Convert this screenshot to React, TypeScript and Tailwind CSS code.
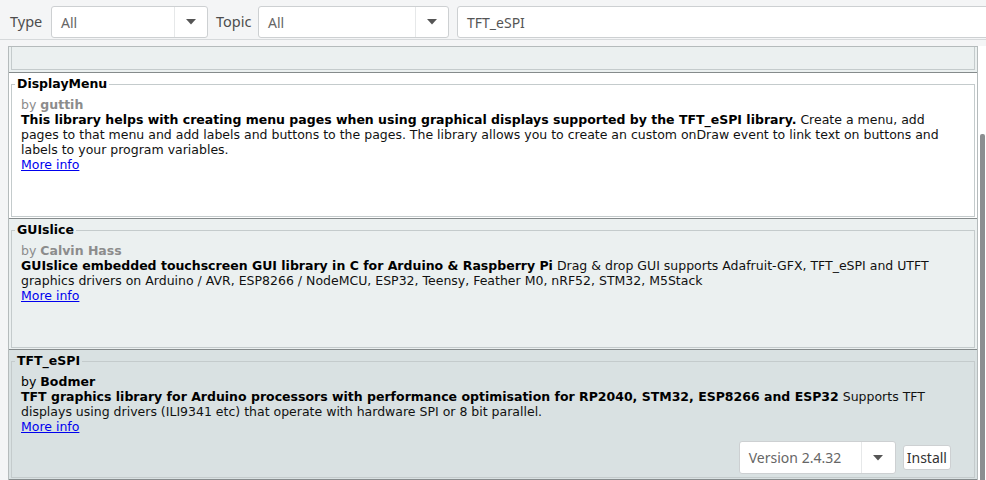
import React from "react";

type Lib = {
  name: string;
  author: string;
  summary: string;
  body: string;
  height: string;
  bg: string;
  selected?: boolean;
};

const LIBS: Lib[] = [
  {
    name: "DisplayMenu",
    author: "guttih",
    summary:
      "This library helps with creating menu pages when using graphical displays supported by the TFT_eSPI library.",
    body:
      "Create a menu, add pages to that menu and add labels and buttons to the pages. The library allows you to create an custom onDraw event to link text on buttons and labels to your program variables.",
    height: "h-[146px]",
    bg: "bg-white",
  },
  {
    name: "GUIslice",
    author: "Calvin Hass",
    summary:
      "GUIslice embedded touchscreen GUI library in C for Arduino & Raspberry Pi",
    body:
      "Drag & drop GUI supports Adafruit-GFX, TFT_eSPI and UTFT graphics drivers on Arduino / AVR, ESP8266 / NodeMCU, ESP32, Teensy, Feather M0, nRF52, STM32, M5Stack",
    height: "h-[131px]",
    bg: "bg-[#ebf0f0]",
  },
  {
    name: "TFT_eSPI",
    author: "Bodmer",
    summary:
      "TFT graphics library for Arduino processors with performance optimisation for RP2040, STM32, ESP8266 and ESP32",
    body:
      "Supports TFT displays using drivers (ILI9341 etc) that operate with hardware SPI or 8 bit parallel.",
    height: "h-[130px]",
    bg: "bg-[#d9e1e2]",
    selected: true,
  },
];

function Caret() {
  return (
    <svg width="10" height="6" viewBox="0 0 10 6" className="fill-[#555]">
      <path d="M0 0h10L5 5.5z" />
    </svg>
  );
}

function Select({ value, width }: { value: string; width: string }) {
  return (
    <div
      className={`${width} shrink-0 h-[32px] flex items-stretch bg-white border border-[#cdd0d2] rounded-[3px]`}
    >
      <span className="flex-1 flex items-center pl-[9px] text-[14px] text-[#666]">
        {value}
      </span>
      <span className="w-[33px] flex items-center justify-center border-l border-[#e6e8e9]">
        <Caret />
      </span>
    </div>
  );
}

function LibraryItem({ lib }: { lib: Lib }) {
  return (
    <div className={`${lib.height} ${lib.bg} border-b border-[#858b8c] px-[2px] pt-[3px] pb-[1px]`}>
      <fieldset className="h-full border border-[#c4cbcc] pl-[3px] pr-[12px] flex flex-col">
        <legend className="px-[2px] text-[12.5px] leading-[16px] font-bold text-black">
          {lib.name}
        </legend>
        <div className="pl-[6px] pt-[5px] text-[12.5px] leading-[15px] text-[#111]">
          <div className={lib.selected ? "text-black" : "text-[#8c8c8c]"}>
            by <b>{lib.author}</b>
          </div>
          <div>
            <b className="text-black">{lib.summary}</b> {lib.body}
          </div>
          <a href="#" className="text-[#0000ee] underline">
            More info
          </a>
        </div>
        {lib.selected && (
          <div className="mt-auto mb-[3px] flex items-center justify-end gap-[7px] pr-[11px] font-['Noto_Sans',sans-serif]">
            <div className="w-[157px] h-[33px] flex items-stretch bg-white border border-[#cdd0d2] rounded-[3px]">
              <span className="flex-1 flex items-center pl-[9px] text-[14px] text-[#666]">
                Version 2.4.32
              </span>
              <span className="w-[34px] flex items-center justify-center border-l border-[#e6e8e9]">
                <Caret />
              </span>
            </div>
            <button className="h-[25px] px-[3px] bg-white border border-[#cdd0d2] rounded-[3px] text-[14px] leading-none text-[#333]">
              Install
            </button>
          </div>
        )}
      </fieldset>
    </div>
  );
}

export default function App() {
  return (
    <div className="w-[986px] h-[480px] overflow-hidden bg-[#f4f5f6] flex flex-col">
      {/* filter bar */}
      <div className="h-[40px] shrink-0 border-b border-[#d6d9db] flex items-start pt-[6px] pl-[10px] font-['Noto_Sans',sans-serif] text-[14.5px] text-[#4d4d4d]">
        <span className="w-[41px] shrink-0 h-[32px] flex items-center">Type</span>
        <Select value="All" width="w-[157px]" />
        <span className="w-[42px] shrink-0 ml-[8px] h-[32px] flex items-center">Topic</span>
        <Select value="All" width="w-[191px]" />
        <div className="ml-[8px] w-[560px] shrink-0 h-[32px] bg-white border border-[#cdd0d2] rounded-[3px] flex items-center pl-[9px] text-[14px] text-[#555]">
          TFT_eSPI
        </div>
      </div>

      {/* library list */}
      <div className="flex-1 min-h-0 mt-[6px] flex">
        <div className="ml-[8px] w-[970px] border-l border-t border-r border-[#b5bbbc] overflow-hidden font-['DejaVu_Sans',sans-serif]">
          <div className="h-[26px] bg-[#ebf0f0] border-b border-[#858b8c] px-[2px]">
            <div className="h-[23px] border border-t-0 border-[#c4cbcc]" />
          </div>
          {LIBS.map((lib) => (
            <LibraryItem key={lib.name} lib={lib} />
          ))}
        </div>
        <div className="flex-1 bg-white flex justify-center pt-[88px]">
          <div className="w-[5px] h-full bg-[#8b8e90] rounded-t-[2px]" />
        </div>
      </div>
    </div>
  );
}
